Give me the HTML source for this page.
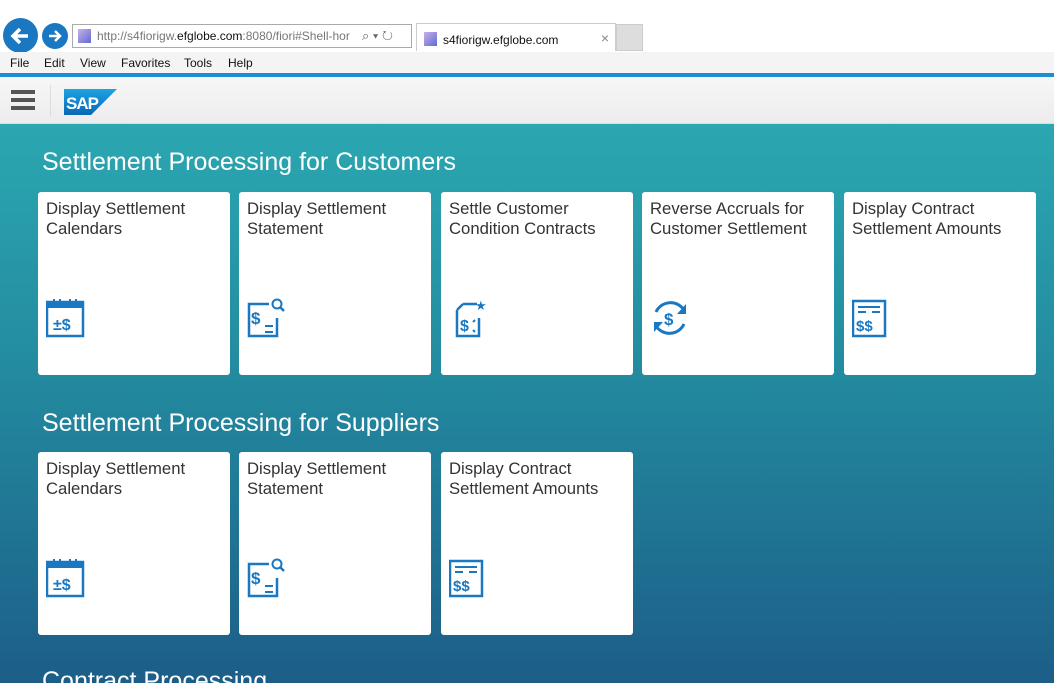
<!DOCTYPE html>
<html><head><meta charset="utf-8"><style>
*{margin:0;padding:0;box-sizing:border-box}
body{width:1054px;height:683px;overflow:hidden;font-family:"Liberation Sans",sans-serif;background:#fff;position:relative}
.top{position:absolute;left:0;top:0;width:1054px;height:52px;background:#fff}
.menu{position:absolute;top:52px;left:0;width:1054px;height:21px;background:#f4f4f4;font-size:12px;color:#111}
.menu span{position:absolute;top:4px}
.blue{position:absolute;top:73px;left:0;width:1054px;height:4px;background:#1a8fd6}
.shell{position:absolute;top:77px;left:0;width:1054px;height:47px;background:linear-gradient(#f7f7f7,#ececec);border-bottom:1px solid #ddd}
.main{position:absolute;top:124px;left:0;width:1054px;height:559px;background:linear-gradient(#2ba7b1 0%,#238a9f 45%,#1c5e88 100%)}
h2{position:absolute;left:42px;color:#fff;font-weight:normal;font-size:25px}
.tile{position:absolute;width:192px;height:183px;background:#fff;border-radius:3px;color:#333;font-size:16.7px;line-height:20px;padding:7px 8px}
.tile svg{position:absolute;left:8px;top:106px}
</style></head><body>
<div class="top">
 <div style="position:absolute;left:3px;top:18px;width:35px;height:35px;border-radius:50%;background:#1a78c2"></div>
 <svg style="position:absolute;left:9px;top:25px" width="22" height="22" viewBox="0 0 22 22"><path d="M19 11H4M11 4L4 11L11 18" stroke="#fff" stroke-width="3.5" fill="none"/></svg>
 <div style="position:absolute;left:42px;top:23px;width:26px;height:26px;border-radius:50%;background:#1a78c2"></div>
 <svg style="position:absolute;left:47px;top:28px" width="16" height="16" viewBox="0 0 16 16"><path d="M2 8H13M8 3L13 8L8 13" stroke="#fff" stroke-width="2.5" fill="none"/></svg>
 <div style="position:absolute;left:72px;top:24px;width:340px;height:24px;border:1px solid #aaa;background:#fff;font-size:12px;color:#777;padding:4px 0 0 24px;white-space:nowrap;overflow:hidden">http://s4fiorigw.<span style="color:#111">efglobe.com</span>:8080/fiori#Shell-hor</div>
 <div style="position:absolute;left:78px;top:29px;width:13px;height:14px;background:linear-gradient(135deg,#c9b1e8,#5e6bd3)"></div>
 <div style="position:absolute;left:362px;top:28px;font-size:13px;color:#666">⌕ ▾ ↻</div>
 <div style="position:absolute;left:416px;top:23px;width:200px;height:28px;border:1px solid #ccc;border-bottom:none;background:#fff;font-size:12px;padding:9px 0 0 26px;color:#111">s4fiorigw.efglobe.com<span style="position:absolute;right:6px;top:6px;color:#888;font-size:14px">×</span></div>
 <div style="position:absolute;left:424px;top:32px;width:13px;height:14px;background:linear-gradient(135deg,#c9b1e8,#5e6bd3)"></div>
 <div style="position:absolute;left:616px;top:24px;width:27px;height:27px;background:#ddd;border:1px solid #ccc"></div>
</div>
<div class="menu"><span style="left:10px">File</span><span style="left:44px">Edit</span><span style="left:80px">View</span><span style="left:121px">Favorites</span><span style="left:184px">Tools</span><span style="left:228px">Help</span></div>
<div class="blue"></div>
<div class="shell">
 <div style="position:absolute;left:11px;top:13px;width:24px;height:4px;background:#555;box-shadow:0 8px 0 #555,0 16px 0 #555"></div>
 <div style="position:absolute;left:50px;top:8px;width:1px;height:32px;background:#ddd"></div>
 <svg style="position:absolute;left:64px;top:12px" width="53" height="26" viewBox="0 0 53 26"><defs><linearGradient id="g" x1="0" y1="0" x2="0" y2="1"><stop offset="0" stop-color="#1ea3e5"/><stop offset="1" stop-color="#0a66b5"/></linearGradient></defs><path d="M0 0H53L27 26H0Z" fill="url(#g)"/><text x="2" y="20" font-family="Liberation Sans" font-weight="bold" font-size="17" fill="#fff" letter-spacing="-1">SAP</text></svg>
</div>
<div class="main"></div>
<h2 style="top:148px">Settlement Processing for Customers</h2>
<h2 style="top:409px">Settlement Processing for Suppliers</h2>
<h2 style="top:667px">Contract Processing</h2>

<div class="tile" style="left:38px;top:192px">Display Settlement<br>Calendars<svg width="40" height="40" viewBox="0 0 40 40"><rect x="1" y="4" width="36" height="34" fill="none" stroke="#1a78c2" stroke-width="2.5"/><rect x="1" y="4" width="36" height="6" fill="#1a78c2"/><path d="M8 1v6M14 1v6M24 1v6M30 1v6" stroke="#1a78c2" stroke-width="2"/><text x="7" y="32" font-family="Liberation Sans" font-weight="bold" font-size="16" fill="#1a78c2">±$</text></svg></div>
<div class="tile" style="left:239px;top:192px">Display Settlement<br>Statement<svg width="40" height="40" viewBox="0 0 40 40"><path d="M22 6H2V38H30V20" fill="none" stroke="#1a78c2" stroke-width="2.5"/><circle cx="30" cy="6" r="4.5" fill="none" stroke="#1a78c2" stroke-width="2"/><path d="M33 9l4 4" stroke="#1a78c2" stroke-width="2.5"/><text x="4" y="26" font-family="Liberation Sans" font-weight="bold" font-size="17" fill="#1a78c2">$</text><path d="M18 28h8M18 34h8" stroke="#1a78c2" stroke-width="2"/></svg></div>
<div class="tile" style="left:441px;top:192px">Settle Customer<br>Condition Contracts<svg width="40" height="40" viewBox="0 0 40 40"><path d="M14 6H28M8 12V38H30V20M8 12l6-6" fill="none" stroke="#1a78c2" stroke-width="2.5"/><text x="26" y="12" font-size="13" fill="#1a78c2" font-family="DejaVu Sans">★</text><text x="11" y="33" font-family="Liberation Sans" font-weight="bold" font-size="16" fill="#1a78c2">$</text><path d="M24 24l2-2M24 32l2 2" stroke="#1a78c2" stroke-width="2"/></svg></div>
<div class="tile" style="left:642px;top:192px">Reverse Accruals for<br>Customer Settlement<svg width="40" height="40" viewBox="0 0 40 40"><path d="M6 14A16 16 0 0 1 34 12M34 26A16 16 0 0 1 6 28" fill="none" stroke="#1a78c2" stroke-width="3"/><path d="M36 6v10h-9zM4 34V24h9z" fill="#1a78c2"/><text x="14" y="27" font-family="Liberation Sans" font-weight="bold" font-size="17" fill="#1a78c2">$</text></svg></div>
<div class="tile" style="left:844px;top:192px">Display Contract<br>Settlement Amounts<svg width="40" height="40" viewBox="0 0 40 40"><rect x="1" y="3" width="32" height="35" fill="none" stroke="#1a78c2" stroke-width="2.5"/><path d="M6 9h22M6 14h8M20 14h8" stroke="#1a78c2" stroke-width="2"/><text x="4" y="33" font-family="Liberation Sans" font-weight="bold" font-size="15" fill="#1a78c2">$$</text></svg></div>

<div class="tile" style="left:38px;top:452px">Display Settlement<br>Calendars<svg width="40" height="40" viewBox="0 0 40 40"><rect x="1" y="4" width="36" height="34" fill="none" stroke="#1a78c2" stroke-width="2.5"/><rect x="1" y="4" width="36" height="6" fill="#1a78c2"/><path d="M8 1v6M14 1v6M24 1v6M30 1v6" stroke="#1a78c2" stroke-width="2"/><text x="7" y="32" font-family="Liberation Sans" font-weight="bold" font-size="16" fill="#1a78c2">±$</text></svg></div>
<div class="tile" style="left:239px;top:452px">Display Settlement<br>Statement<svg width="40" height="40" viewBox="0 0 40 40"><path d="M22 6H2V38H30V20" fill="none" stroke="#1a78c2" stroke-width="2.5"/><circle cx="30" cy="6" r="4.5" fill="none" stroke="#1a78c2" stroke-width="2"/><path d="M33 9l4 4" stroke="#1a78c2" stroke-width="2.5"/><text x="4" y="26" font-family="Liberation Sans" font-weight="bold" font-size="17" fill="#1a78c2">$</text><path d="M18 28h8M18 34h8" stroke="#1a78c2" stroke-width="2"/></svg></div>
<div class="tile" style="left:441px;top:452px">Display Contract<br>Settlement Amounts<svg width="40" height="40" viewBox="0 0 40 40"><rect x="1" y="3" width="32" height="35" fill="none" stroke="#1a78c2" stroke-width="2.5"/><path d="M6 9h22M6 14h8M20 14h8" stroke="#1a78c2" stroke-width="2"/><text x="4" y="33" font-family="Liberation Sans" font-weight="bold" font-size="15" fill="#1a78c2">$$</text></svg></div>
</body></html>
